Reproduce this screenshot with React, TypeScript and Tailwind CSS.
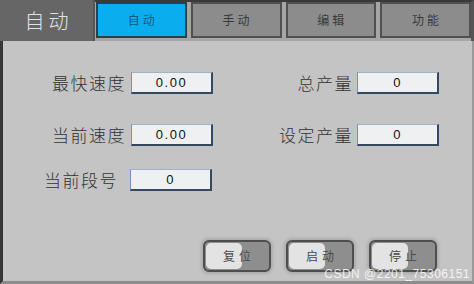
const cjk = { fontFamily: '"Noto Sans CJK SC", "Noto Sans", sans-serif' };
const latin = { fontFamily: '"Liberation Sans", Arial, sans-serif' };

function ValueBox({ value }: { value: string }) {
  return (
    <div
      className="h-[22px] w-[82px] flex items-center justify-center bg-[#eef0f2] border-t border-l border-t-[#9fb3c8] border-l-[#6f93bd] border-b-2 border-r-2 border-b-[#34495f] border-r-[#34495f] text-[13px] text-[#111]"
      style={latin}
    >
      {value}
    </div>
  );
}

function SlideButton({ label }: { label: string }) {
  return (
    <div className="relative h-[32px] w-[68px] rounded-[6px] border-2 border-[#4e4e4e] bg-[#8e8e8e] shadow-[0_0_3px_2px_#acacac] overflow-hidden">
      <div className="absolute left-[1px] top-[1px] bottom-[1px] w-[36px] rounded-[5px] bg-[#e3e3e3]" />
      <div
        className="relative h-full flex items-center justify-center text-[12px] tracking-[4px] pl-[4px] text-[#4a4a4a]"
        style={cjk}
      >
        {label}
      </div>
    </div>
  );
}

const tabs = ["自动", "手动", "编辑", "功能"];

const rowCls =
  "grid items-center text-[17px] leading-[22px] tracking-[1.5px] font-light text-[#333]";

export default function App() {
  return (
    <div className="w-[474px] h-[284px] flex flex-col bg-[#c4c4c4] overflow-hidden" style={cjk}>
      {/* top bar */}
      <div className="h-[41px] flex shrink-0">
        <div className="w-[95px] h-full bg-[#666666] border-r-2 border-[#555] flex items-center justify-center text-[20px] tracking-[4px] pl-[4px] text-[#e2e2e2] font-light">
          自动
        </div>
        <div className="flex-1 flex gap-[4px] bg-[#a6a6a6] border-t-2 border-[#3a3a3a] pl-[1px] pb-[3px] border-r-[3px] border-r-[#555]">
          {tabs.map((t, i) => (
            <div
              key={t}
              className={
                i === 0
                  ? "flex-1 flex items-center justify-center border-2 border-[#2c3f4c] bg-[#0aaeef] text-[12px] tracking-[3px] pl-[3px] text-[#1d5682]"
                  : "flex-1 flex items-center justify-center border-2 border-[#505050] bg-[#8c8c8c] text-[12px] tracking-[3px] pl-[3px] text-[#3a3a3a]"
              }
            >
              {t}
            </div>
          ))}
        </div>
      </div>

      {/* body */}
      <div className="relative flex-1 flex flex-col border-l-[3px] border-[#373737] border-r-2 border-r-[#9a9a9a] border-b-[3px] border-b-[#8c8c8c] pt-[31px] pb-[9px]">
        <div className={`${rowCls} grid-cols-[128px_82px_144px_82px]`}>
          <div className="text-right pr-[5px]">最快速度</div>
          <ValueBox value="0.00" />
          <div className="text-right pr-[4px]">总产量</div>
          <ValueBox value="0" />
        </div>
        <div className={`${rowCls} mt-[30px] grid-cols-[128px_82px_144px_82px]`}>
          <div className="text-right pr-[5px]">当前速度</div>
          <ValueBox value="0.00" />
          <div className="text-right pr-[4px]">设定产量</div>
          <ValueBox value="0" />
        </div>
        <div className={`${rowCls} mt-[23px] grid-cols-[127px_82px]`}>
          <div className="text-right pr-[12px]">当前段号</div>
          <ValueBox value="0" />
        </div>

        <div className="mt-auto flex gap-[15px] pl-[200px]">
          <SlideButton label="复位" />
          <SlideButton label="启动" />
          <SlideButton label="停止" />
        </div>

        <div
          className="absolute right-[2px] bottom-[-2px] text-[12px] text-white/80 tracking-[0.5px]"
          style={latin}
        >
          CSDN @2201_75306151
        </div>
      </div>
    </div>
  );
}
